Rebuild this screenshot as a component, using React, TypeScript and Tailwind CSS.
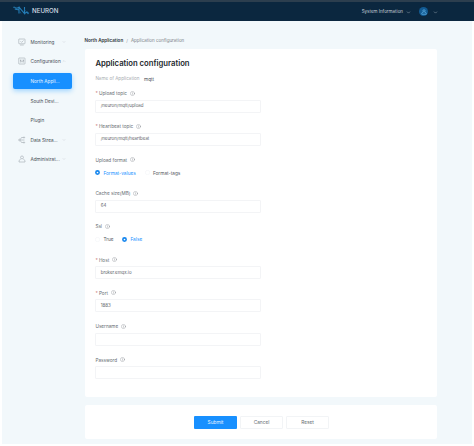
import type { ReactNode } from "react";
import { ChevronDown, ChevronUp, Info } from "lucide-react";

type NavItemProps = { label: string; icon?: ReactNode; open?: boolean; active?: boolean };

function Glyph({ children }: { children: ReactNode }) {
  return (
    <svg width="8" height="8" viewBox="0 0 16 16" fill="none" stroke="currentColor" strokeWidth="1.1">
      {children}
    </svg>
  );
}

const MonitorIcon = () => (
  <Glyph>
    <rect x="1.5" y="2" width="12.5" height="9.5" rx="1" />
    <path d="M4 14H11.5M5 6.5L7.2 8.7L11 5" />
  </Glyph>
);

const ConfigIcon = () => (
  <Glyph>
    <rect x="1.5" y="2" width="12.5" height="12" rx="1" />
    <path d="M5 5V11M8 5V11M11 5V11M4 7H6M7 9H9M10 7H12" />
  </Glyph>
);

const StreamIcon = () => (
  <Glyph>
    <circle cx="3" cy="8" r="1.7" />
    <circle cx="12" cy="3" r="1.3" />
    <circle cx="12" cy="13" r="1.3" />
    <path d="M4.5 7L7 3H10.7M4.5 9L7 13H10.7M4.7 8H13" />
  </Glyph>
);

const PersonIcon = () => (
  <Glyph>
    <circle cx="8" cy="4.8" r="2.9" />
    <path d="M5.5 8.2L2 11V14H14V11L10.5 8.2" />
  </Glyph>
);

function NavItem({ label, icon, open, active }: NavItemProps) {
  return (
    <div
      className={
        "flex h-[15.6px] w-[59px] shrink-0 items-center rounded-[2px] pl-[5px] " +
        (active ? "bg-[#1890ff] text-[#e9f5ff] shadow-[0_2px_5px_#9fd4ff]" : "text-[#454c54]")
      }
    >
      <span className="w-[12.5px] shrink-0 text-[#9aa1a8]">{icon}</span>
      <span className="w-[31px] shrink-0 whitespace-nowrap">{label}</span>
      {icon && (
        <span className="text-[#a5adb4]">
          {open ? <ChevronUp size={4} strokeWidth={1.5} /> : <ChevronDown size={4} strokeWidth={1.5} />}
        </span>
      )}
    </div>
  );
}

function Label({ text, required }: { text: string; required?: boolean }) {
  return (
    <div className="flex h-[6px] items-center whitespace-nowrap text-[#666c72]">
      {required && <span className="w-[3.5px] text-[#c98080]">*</span>}
      <span>{text}</span>
      <Info size={5} strokeWidth={1.8} className="ml-[2.7px] text-[#81878d]" />
    </div>
  );
}

function Field({ text, value, required }: { text: string; value?: string; required?: boolean }) {
  return (
    <div className="h-[33.3px] shrink-0">
      <Label text={text} required={required} />
      <div className="mt-[3.5px] flex h-[13px] w-[166px] items-center rounded-[1px] border border-[#f3f4f6] pl-[4.3px] text-[4.4px] text-[#5d6267]">
        {value}
      </div>
    </div>
  );
}

function Radio({ text, on }: { text: string; on?: boolean }) {
  return (
    <div className={"flex items-center whitespace-nowrap text-[4.75px] " + (on ? "text-[#1890ff]" : "text-[#555a60]")}>
      <svg width="5" height="5" viewBox="0 0 10 10" className="mr-[3px]">
        <circle cx="5" cy="5" r={on ? 3.3 : 4.4} fill="white" stroke={on ? "#1485ee" : "#f1f3f5"} strokeWidth={on ? 3.2 : 1} />
      </svg>
      {text}
    </div>
  );
}

function Choices({ text, children }: { text: string; children: ReactNode }) {
  return (
    <div className="h-[33.3px] shrink-0">
      <Label text={text} />
      <div className="mt-[3.5px] flex h-[13px] items-center">{children}</div>
    </div>
  );
}

function Button({ text, primary }: { text: string; primary?: boolean }) {
  return (
    <button
      className={
        "flex h-[13px] w-[43px] items-center justify-center rounded-[1px] text-[4.8px] " +
        (primary ? "bg-[#1890ff] text-[#e3f2ff]" : "border border-[#f2f4f6] bg-white text-[#666c72]")
      }
    >
      {text}
    </button>
  );
}

export default function App() {
  return (
    <div className="flex h-[446px] w-[474px] flex-col overflow-hidden bg-white font-['Inter','Liberation_Sans',sans-serif] text-[4.7px] leading-[6px]">
      <header className="flex h-[21px] shrink-0 items-center border-t-2 border-[#2c3e4e] bg-[#0b273f] pl-[13px] text-[#c4ced6]">
        <svg width="17" height="9" viewBox="0 0 17 9" fill="none" className="-mt-[2px]">
          <path d="M0.5 1.2L4 2.2L6 1.2V7.5M1.8 3L6 4M6 1.2L11.5 7.5V1M11.5 7.5L14 6L15.5 7.5" stroke="#257eb8" strokeWidth="1.1" />
          <path d="M6 4L8 7.5M11.5 4L14 6" stroke="#175780" strokeWidth="0.9" />
          <circle cx="1.2" cy="1.3" r="0.8" fill="#236894" />
          <circle cx="15" cy="7.3" r="0.9" fill="#1d659b" />
        </svg>
        <span className="-mt-[2px] ml-[2px] text-[6.2px] font-medium text-[#d7dfe5]">NEURON</span>
        <span className="mt-[1px] ml-auto text-[4.5px]">System Information</span>
        <ChevronDown size={5} strokeWidth={2} className="mt-[1px] ml-[3px]" />
        <span className="ml-[8px] flex h-[9px] w-[9px] items-center justify-center rounded-full bg-[#125a92] text-[#69b9ed]">
          <svg width="6" height="6" viewBox="0 0 16 16" fill="none" stroke="currentColor" strokeWidth="1.8">
            <circle cx="8" cy="5" r="3" />
            <path d="M5 8L2 11V14H14V11L11 8" />
          </svg>
        </span>
        <ChevronDown size={5} strokeWidth={2} className="mt-[1px] mr-[36px] ml-[5px]" />
      </header>

      <div className="mx-[2px] mb-[2px] flex min-h-0 flex-1 bg-[#f2f8fb]">
        <nav className="flex w-[82.5px] shrink-0 flex-col gap-[4px] pt-[13px] pl-[11px]">
          <NavItem label="Monitoring" icon={<MonitorIcon />} />
          <NavItem label="Configuration" icon={<ConfigIcon />} open />
          <NavItem label="North Appli..." active />
          <NavItem label="South Devi..." />
          <NavItem label="Plugin" />
          <NavItem label="Data Strea..." icon={<StreamIcon />} />
          <NavItem label="Administrat..." icon={<PersonIcon />} />
        </nav>

        <main className="flex w-[352.5px] shrink-0 flex-col">
          <div className="flex h-[27px] shrink-0 items-center pt-[13px] whitespace-nowrap">
            <span className="text-[4.55px] font-semibold text-[#30363c]">North Application</span>
            <span className="mx-[3px] text-[#9aa1a7]">/</span>
            <span className="text-[4.5px] text-[#7b8289]">Application configuration</span>
          </div>
          <section className="mt-px flex h-[348px] shrink-0 flex-col rounded-[2px] bg-white pt-[9px] pl-[10.9px]">
            <h1 className="h-[12px] shrink-0 text-[7.7px] leading-[12px] font-semibold text-[#22272c]">Application configuration</h1>
            <div className="mt-[5.5px] mb-[8.7px] flex h-[6px] shrink-0 items-center">
              <span className="text-[4.6px] text-[#a8adb2]">Name of Application</span>
              <span className="ml-[4.5px] text-[#454b51]">mqtt</span>
            </div>
            <Field text="Upload topic" value="/neuron/mqtt/upload" required />
            <Field text="Heartbeat topic" value="/neuron/mqtt/heartbeat" required />
            <Choices text="Upload format">
              <div className="w-[49.5px]"><Radio text="Format-values" on /></div>
              <Radio text="Format-tags" />
            </Choices>
            <Field text="Cache size(MB)" value="64" />
            <Choices text="Ssl">
              <div className="w-[27px]"><Radio text="True" /></div>
              <Radio text="False" on />
            </Choices>
            <Field text="Host" value="broker.emqx.io" required />
            <Field text="Port" value="1883" required />
            <Field text="Username" />
            <Field text="Password" />
          </section>
          <footer className="mt-[8px] flex h-[34px] shrink-0 items-center justify-center gap-[3px] rounded-[2px] bg-white pl-[1.5px]">
            <Button text="Submit" primary />
            <Button text="Cancel" />
            <Button text="Reset" />
          </footer>
        </main>
      </div>
    </div>
  );
}
